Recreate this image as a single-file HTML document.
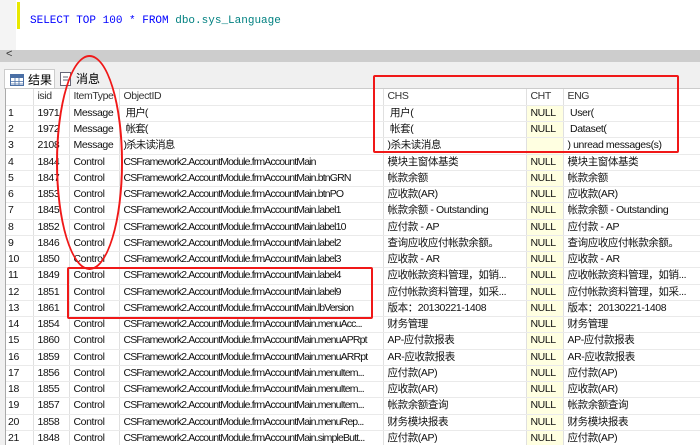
<!DOCTYPE html>
<html><head><meta charset="utf-8"><style>
*{margin:0;padding:0;box-sizing:border-box}
body{width:700px;height:445px;overflow:hidden;background:#f0f0f0;font-family:"Liberation Sans","Noto Sans CJK SC",sans-serif;font-size:11px;color:#000;position:relative}
.ed{position:absolute;left:0;top:0;width:700px;height:50px;background:#fff}
.gut{position:absolute;left:0;top:0;width:16px;height:50px;background:#f4f4f4}
.yb{position:absolute;left:17px;top:2px;width:3px;height:27px;background:#e8e800}
.sql{position:absolute;left:30px;top:15px;font-family:"Liberation Mono",monospace;font-size:11px;color:#0000ff}
.sb{position:absolute;left:0;top:50px;width:700px;height:12px;background:#cdcdcd}
.tabs{position:absolute;left:0;top:62px;width:700px;height:27px;background:#f0f0f0}
.tab{position:absolute;top:7px;height:20px;font-size:12px;line-height:20px;white-space:nowrap}
.grid{position:absolute;left:5px;top:88px;width:695px;height:357px;background:#fff;border-left:1px solid #aaa;border-top:1px solid #ccc;overflow:hidden}
table{border-collapse:collapse;table-layout:fixed;position:absolute;left:0;top:0;width:695px}
td{height:16.25px;border-right:1px solid #e0e0e0;border-bottom:1px solid #eaeaea;padding-left:4px;white-space:nowrap;overflow:hidden;font-size:10.5px;line-height:15px;letter-spacing:-0.4px;color:#111}
td:nth-child(4){letter-spacing:-0.85px}
tr.h td{color:#333;letter-spacing:-0.4px}
td.n{background:#ffffe1;padding-left:4px}
td.r{padding-left:2px}
.red{position:absolute;border:2px solid #f01818}
</style></head><body>
<div class="ed"><div class="gut"></div><div class="yb"></div>
<div class="sql">SELECT TOP 100 * FROM <span style="color:#008080">dbo.sys_Language</span></div></div>
<div class="sb"><span style="position:absolute;left:6px;top:-2px;font-size:11px;color:#333">&lt;</span></div>
<div class="tabs">
<div class="tab" style="left:4px;width:51px;padding-left:23px;background:#fff;border:1px solid #ccc;border-bottom:none">
<svg style="position:absolute;left:5px;top:4px" width="14" height="12"><rect x="0.5" y="0.5" width="13" height="11" fill="#fff" stroke="#4a6fa5"/><rect x="1" y="1" width="12" height="3" fill="#4a6fa5"/><path d="M1 7.5H13M1 10H13M5 4V12M9 4V12" stroke="#4a6fa5" stroke-width="0.8"/></svg>结果</div>
<div class="tab" style="left:57px;width:46px;padding-left:19px">
<svg style="position:absolute;left:3px;top:3px" width="12" height="14"><rect x="0.5" y="0.5" width="10" height="13" fill="#fff" stroke="#667"/><path d="M3 5H8M3 8H8" stroke="#667"/></svg>消息</div>
</div>
<div class="grid"><table>
<colgroup><col style="width:27px"><col style="width:36px"><col style="width:50px"><col style="width:264px"><col style="width:143px"><col style="width:37px"><col style="width:138px"></colgroup>
<tr class="h"><td></td><td>isid</td><td>ItemType</td><td>ObjectID</td><td>CHS</td><td>CHT</td><td>ENG</td></tr>
<tr><td class="r">1</td><td>1971</td><td>Message</td><td>&nbsp;用户(</td><td>&nbsp;用户(</td><td class="n">NULL</td><td>&nbsp;User(</td></tr>
<tr><td class="r">2</td><td>1972</td><td>Message</td><td>&nbsp;帐套(</td><td>&nbsp;帐套(</td><td class="n">NULL</td><td>&nbsp;Dataset(</td></tr>
<tr><td class="r">3</td><td>2108</td><td>Message</td><td>)杀未读消息</td><td>)杀未读消息</td><td class="n"></td><td>) unread messages(s)</td></tr>
<tr><td class="r">4</td><td>1844</td><td>Control</td><td>CSFramework2.AccountModule.frmAccountMain</td><td>模块主窗体基类</td><td class="n">NULL</td><td>模块主窗体基类</td></tr>
<tr><td class="r">5</td><td>1847</td><td>Control</td><td>CSFramework2.AccountModule.frmAccountMain.btnGRN</td><td>帐款余额</td><td class="n">NULL</td><td>帐款余额</td></tr>
<tr><td class="r">6</td><td>1853</td><td>Control</td><td>CSFramework2.AccountModule.frmAccountMain.btnPO</td><td>应收款(AR)</td><td class="n">NULL</td><td>应收款(AR)</td></tr>
<tr><td class="r">7</td><td>1845</td><td>Control</td><td>CSFramework2.AccountModule.frmAccountMain.label1</td><td>帐款余额 - Outstanding</td><td class="n">NULL</td><td>帐款余额 - Outstanding</td></tr>
<tr><td class="r">8</td><td>1852</td><td>Control</td><td>CSFramework2.AccountModule.frmAccountMain.label10</td><td>应付款 - AP</td><td class="n">NULL</td><td>应付款 - AP</td></tr>
<tr><td class="r">9</td><td>1846</td><td>Control</td><td>CSFramework2.AccountModule.frmAccountMain.label2</td><td>查询应收应付帐款余额。</td><td class="n">NULL</td><td>查询应收应付帐款余额。</td></tr>
<tr><td class="r">10</td><td>1850</td><td>Control</td><td>CSFramework2.AccountModule.frmAccountMain.label3</td><td>应收款 - AR</td><td class="n">NULL</td><td>应收款 - AR</td></tr>
<tr><td class="r">11</td><td>1849</td><td>Control</td><td>CSFramework2.AccountModule.frmAccountMain.label4</td><td>应收帐款资料管理，如销...</td><td class="n">NULL</td><td>应收帐款资料管理，如销...</td></tr>
<tr><td class="r">12</td><td>1851</td><td>Control</td><td>CSFramework2.AccountModule.frmAccountMain.label9</td><td>应付帐款资料管理，如采...</td><td class="n">NULL</td><td>应付帐款资料管理，如采...</td></tr>
<tr><td class="r">13</td><td>1861</td><td>Control</td><td>CSFramework2.AccountModule.frmAccountMain.lbVersion</td><td>版本：20130221-1408</td><td class="n">NULL</td><td>版本：20130221-1408</td></tr>
<tr><td class="r">14</td><td>1854</td><td>Control</td><td>CSFramework2.AccountModule.frmAccountMain.menuAcc...</td><td>财务管理</td><td class="n">NULL</td><td>财务管理</td></tr>
<tr><td class="r">15</td><td>1860</td><td>Control</td><td>CSFramework2.AccountModule.frmAccountMain.menuAPRpt</td><td>AP-应付款报表</td><td class="n">NULL</td><td>AP-应付款报表</td></tr>
<tr><td class="r">16</td><td>1859</td><td>Control</td><td>CSFramework2.AccountModule.frmAccountMain.menuARRpt</td><td>AR-应收款报表</td><td class="n">NULL</td><td>AR-应收款报表</td></tr>
<tr><td class="r">17</td><td>1856</td><td>Control</td><td>CSFramework2.AccountModule.frmAccountMain.menuItem...</td><td>应付款(AP)</td><td class="n">NULL</td><td>应付款(AP)</td></tr>
<tr><td class="r">18</td><td>1855</td><td>Control</td><td>CSFramework2.AccountModule.frmAccountMain.menuItem...</td><td>应收款(AR)</td><td class="n">NULL</td><td>应收款(AR)</td></tr>
<tr><td class="r">19</td><td>1857</td><td>Control</td><td>CSFramework2.AccountModule.frmAccountMain.menuItem...</td><td>帐款余额查询</td><td class="n">NULL</td><td>帐款余额查询</td></tr>
<tr><td class="r">20</td><td>1858</td><td>Control</td><td>CSFramework2.AccountModule.frmAccountMain.menuRep...</td><td>财务模块报表</td><td class="n">NULL</td><td>财务模块报表</td></tr>
<tr><td class="r">21</td><td>1848</td><td>Control</td><td>CSFramework2.AccountModule.frmAccountMain.simpleButt...</td><td>应付款(AP)</td><td class="n">NULL</td><td>应付款(AP)</td></tr>
</table></div>
<div class="red" style="left:56px;top:55px;width:67px;height:215px;border-radius:50%"></div>
<div class="red" style="left:373px;top:75px;width:306px;height:78px;border-radius:2px"></div>
<div class="red" style="left:67px;top:267px;width:306px;height:52px;border-radius:2px"></div>
</body></html>
